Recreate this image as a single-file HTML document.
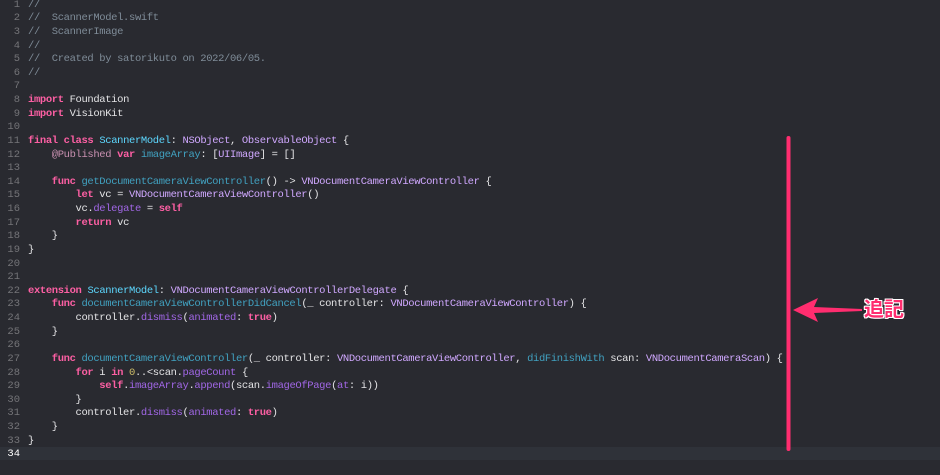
<!DOCTYPE html>
<html><head><meta charset="utf-8"><style>
html,body{margin:0;padding:0;background:#292a30;width:940px;height:475px;overflow:hidden}
.hl{position:absolute;left:0;top:447px;width:940px;height:13px;background:#2f3239}
pre{position:absolute;left:0;top:-1.3px;margin:0;font-family:"Liberation Mono",monospace;font-size:10.5px;letter-spacing:-0.36px;line-height:13.62px;color:#e4e4e6}
.ln{display:inline-block;width:20px;text-align:right;color:#747478;margin-right:8px;letter-spacing:0}
.cur{color:#fff}
.c{color:#7f8c98}.k{color:#fc5fa3;font-weight:bold}.t{color:#5dd8ff}.o{color:#d0a8ff}.f{color:#41a1c0}.m{color:#a167e6}.n{color:#d0bf69}.a{color:#c890b0}
.jp{position:absolute;left:864px;top:295px;font-family:"Noto Sans CJK JP",sans-serif;font-weight:bold;font-size:20px;line-height:26px;color:#ff2d6f;text-shadow:-1px -1px 0 #fff,1px -1px 0 #fff,-1px 1px 0 #fff,1px 1px 0 #fff,0 1px 0 #fff,0 -1px 0 #fff,1px 0 0 #fff,-1px 0 0 #fff}
</style></head><body>
<div class="hl"></div>
<pre><span class="ln">1</span><span class="c">//</span>
<span class="ln">2</span><span class="c">//  ScannerModel.swift</span>
<span class="ln">3</span><span class="c">//  ScannerImage</span>
<span class="ln">4</span><span class="c">//</span>
<span class="ln">5</span><span class="c">//  Created by satorikuto on 2022/06/05.</span>
<span class="ln">6</span><span class="c">//</span>
<span class="ln">7</span>
<span class="ln">8</span><span class="k">import</span> Foundation
<span class="ln">9</span><span class="k">import</span> VisionKit
<span class="ln">10</span>
<span class="ln">11</span><span class="k">final class</span> <span class="t">ScannerModel</span>: <span class="o">NSObject</span>, <span class="o">ObservableObject</span> {
<span class="ln">12</span>    <span class="a">@Published</span> <span class="k">var</span> <span class="f">imageArray</span>: [<span class="o">UIImage</span>] = []
<span class="ln">13</span>
<span class="ln">14</span>    <span class="k">func</span> <span class="f">getDocumentCameraViewController</span>() -&gt; <span class="o">VNDocumentCameraViewController</span> {
<span class="ln">15</span>        <span class="k">let</span> vc = <span class="o">VNDocumentCameraViewController</span>()
<span class="ln">16</span>        vc.<span class="m">delegate</span> = <span class="k">self</span>
<span class="ln">17</span>        <span class="k">return</span> vc
<span class="ln">18</span>    }
<span class="ln">19</span>}
<span class="ln">20</span>
<span class="ln">21</span>
<span class="ln">22</span><span class="k">extension</span> <span class="t">ScannerModel</span>: <span class="o">VNDocumentCameraViewControllerDelegate</span> {
<span class="ln">23</span>    <span class="k">func</span> <span class="f">documentCameraViewControllerDidCancel</span>(_ controller: <span class="o">VNDocumentCameraViewController</span>) {
<span class="ln">24</span>        controller.<span class="m">dismiss</span>(<span class="m">animated</span>: <span class="k">true</span>)
<span class="ln">25</span>    }
<span class="ln">26</span>
<span class="ln">27</span>    <span class="k">func</span> <span class="f">documentCameraViewController</span>(_ controller: <span class="o">VNDocumentCameraViewController</span>, <span class="f">didFinishWith</span> scan: <span class="o">VNDocumentCameraScan</span>) {
<span class="ln">28</span>        <span class="k">for</span> i <span class="k">in</span> <span class="n">0</span>..&lt;scan.<span class="m">pageCount</span> {
<span class="ln">29</span>            <span class="k">self</span>.<span class="m">imageArray</span>.<span class="m">append</span>(scan.<span class="m">imageOfPage</span>(<span class="m">at</span>: i))
<span class="ln">30</span>        }
<span class="ln">31</span>        controller.<span class="m">dismiss</span>(<span class="m">animated</span>: <span class="k">true</span>)
<span class="ln">32</span>    }
<span class="ln">33</span>}
<span class="ln cur">34</span></pre>
<svg style="position:absolute;left:0;top:0" width="940" height="475">
<line x1="788.5" y1="138" x2="788.5" y2="449" stroke="#ff2d6f" stroke-width="4" stroke-linecap="round"/>
<path d="M793 310 L818 298 L814 307 L862 309 L862 311 L814 313 L818 322 Z" fill="#ff2d6f"/>
</svg>
<div class="jp">追記</div>
</body></html>
